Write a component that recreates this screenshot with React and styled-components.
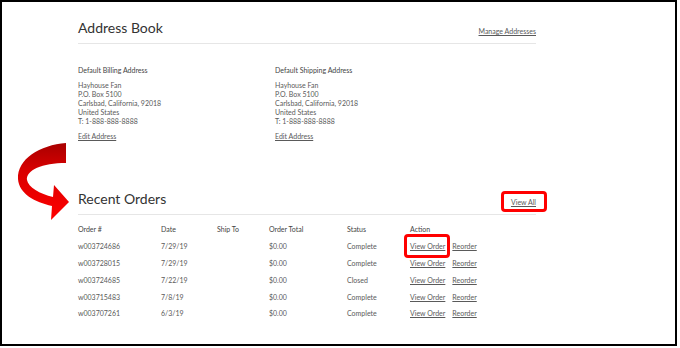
import React from 'react';
import styled, { createGlobalStyle } from 'styled-components';

const GlobalStyle = createGlobalStyle`
    html, body {
        margin: 0;
        padding: 0;
        background: #fff;
    }
    body {
        font-family: Lato, "Noto Sans", sans-serif;
        color: #555;
    }
`;

const Frame = styled.div`
    position: relative;
    box-sizing: border-box;
    width: 677px;
    height: 346px;
    border: 2px solid #000;
    background: #fff;
`;

const Content = styled.div`
    width: 458px;
    padding: 18px 0 0 76px;
`;

const SectionHeader = styled.div`
    display: flex;
    justify-content: space-between;
    align-items: flex-end;
    padding-bottom: 7px;
    border-bottom: 1px solid #e6e6e6;
    margin-top: ${props => props.$top || 0}px;
`;

const SectionTitle = styled.h2`
    margin: 0;
    font-family: Lato, sans-serif;
    font-weight: 400;
    font-size: 14px;
    line-height: 16px;
    color: #333;
`;

const SmallLink = styled.a`
    font-size: 7px;
    line-height: 9px;
    color: #5a5a5a;
    text-decoration: underline;
    text-underline-offset: 1px;
    cursor: pointer;
`;

const Highlight = styled.span`
    position: relative;
    display: inline-block;
    font-size: 7px;
    line-height: 9px;

    &::after {
        content: '';
        position: absolute;
        top: ${props => -props.$t}px;
        bottom: ${props => -props.$b}px;
        left: ${props => -props.$l}px;
        right: ${props => -props.$r}px;
        border: 3px solid #f00;
        border-radius: 4px;
    }
`;

const AddressGrid = styled.div`
    display: grid;
    grid-template-columns: 197px 1fr;
    margin-top: 22px;
`;

const AddressCard = styled.div`
    display: flex;
    flex-direction: column;
    font-size: 7px;
    line-height: 9px;
`;

const CardLabel = styled.div`
    color: #444;
    margin-bottom: 6px;
`;

const AddressLine = styled.div`
    color: #5a5a5a;
    line-height: 8.9px;
`;

const EditLink = styled(SmallLink)`
    margin-top: 6px;
    align-self: flex-start;
`;

const OrdersTable = styled.div`
    display: grid;
    grid-template-columns: 83px 56px 52px 78px 63px 1fr;
    grid-auto-rows: 16.8px;
    align-items: center;
    margin-top: 7px;
    font-size: 7px;
    line-height: 9px;
`;

const HeadCell = styled.div`
    color: #444;
    padding-bottom: 1px;
`;

const Cell = styled.div`
    color: #5a5a5a;
`;

const Actions = styled.div`
    display: flex;
    gap: 7px;
    align-items: center;
`;

const ArrowWrap = styled.div`
    position: absolute;
    left: 10px;
    top: 136px;
    width: 62px;
    height: 92px;
`;

const CurvedArrow = () => (
    <svg width="62" height="92" viewBox="10 136 62 92">
        <defs>
            <linearGradient id="arrowFill" x1="0" y1="0" x2="0" y2="1">
                <stop offset="0" stopColor="#a80000" />
                <stop offset="0.35" stopColor="#d80000" />
                <stop offset="1" stopColor="#ff0000" />
            </linearGradient>
        </defs>
        <path
            d="M64,141 C38,143 15,157 16,177 C17,192 33,200 50,204 L49,218 L67,200 L52,183 L51,195 C38,192 26,185 25,178 C24,168 40,161 64,161 Z"
            fill="url(#arrowFill)"
        />
    </svg>
);

const addresses = [
    { title: 'Default Billing Address' },
    { title: 'Default Shipping Address' },
];

const addressLines = [
    'Hayhouse Fan',
    'P.O. Box 5100',
    'Carlsbad, California, 92018',
    'United States',
    'T: 1-888-888-8888',
];

const orders = [
    { id: 'w003724686', date: '7/29/19', total: '$0.00', status: 'Complete' },
    { id: 'w003728015', date: '7/29/19', total: '$0.00', status: 'Complete' },
    { id: 'w003724685', date: '7/22/19', total: '$0.00', status: 'Closed' },
    { id: 'w003715483', date: '7/8/19', total: '$0.00', status: 'Complete' },
    { id: 'w003707261', date: '6/3/19', total: '$0.00', status: 'Complete' },
];

const App = () => {
    return (
        <Frame>
            <GlobalStyle />
            <Content>
                <SectionHeader>
                    <SectionTitle>Address Book</SectionTitle>
                    <SmallLink>Manage Addresses</SmallLink>
                </SectionHeader>
                <AddressGrid>
                    {addresses.map(a => (
                        <AddressCard key={a.title}>
                            <CardLabel>{a.title}</CardLabel>
                            {addressLines.map(line => (
                                <AddressLine key={line}>{line}</AddressLine>
                            ))}
                            <EditLink>Edit Address</EditLink>
                        </AddressCard>
                    ))}
                </AddressGrid>

                <SectionHeader $top={50}>
                    <SectionTitle>Recent Orders</SectionTitle>
                    <Highlight $t={7} $b={5} $l={10} $r={11}>
                        <SmallLink>View All</SmallLink>
                    </Highlight>
                </SectionHeader>
                <OrdersTable>
                    <HeadCell>Order #</HeadCell>
                    <HeadCell>Date</HeadCell>
                    <HeadCell>Ship To</HeadCell>
                    <HeadCell>Order Total</HeadCell>
                    <HeadCell>Status</HeadCell>
                    <HeadCell>Action</HeadCell>
                    {orders.map((o, i) => (
                        <React.Fragment key={o.id}>
                            <Cell>{o.id}</Cell>
                            <Cell>{o.date}</Cell>
                            <Cell></Cell>
                            <Cell>{o.total}</Cell>
                            <Cell>{o.status}</Cell>
                            <Actions>
                                {i === 0 ? (
                                    <Highlight $t={8} $b={7} $l={6} $r={5}>
                                        <SmallLink>View Order</SmallLink>
                                    </Highlight>
                                ) : (
                                    <SmallLink>View Order</SmallLink>
                                )}
                                <SmallLink>Reorder</SmallLink>
                            </Actions>
                        </React.Fragment>
                    ))}
                </OrdersTable>
            </Content>
            <ArrowWrap>
                <CurvedArrow />
            </ArrowWrap>
        </Frame>
    );
};

export default App;
